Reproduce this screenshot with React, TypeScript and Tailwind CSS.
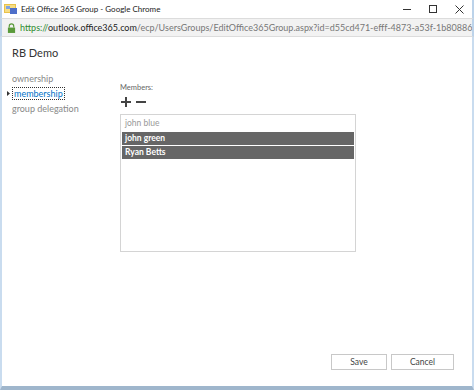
import React from "react";

export default function App() {
  const font = { fontFamily: 'Lato, "Open Sans", Arial, sans-serif' };
  return (
    <div className="w-[474px] h-[390px] bg-white flex flex-col overflow-hidden" style={font}>
      {/* title bar */}
      <div className="h-[18px] flex items-center border-l-2 border-r-2 border-[#bcd3ea] bg-white">
        <svg width="14" height="12" viewBox="0 0 14 12" className="ml-[2px] mr-[3px]">
          <rect x="0" y="1" width="12" height="9" fill="#e9c24a" />
          <rect x="1" y="2" width="10" height="7" fill="#f6dd84" />
          <rect x="6" y="5" width="7" height="6" fill="#4e6fc9" />
          <rect x="2" y="3" width="4" height="3" fill="#7fa4e0" />
        </svg>
        <span className="text-[8px] text-[#222]">Edit Office 365 Group - Google Chrome</span>
        <div className="ml-auto flex items-center h-full">
          <span className="w-[26px] flex justify-center"><span className="block w-[8px] h-px bg-[#333]" /></span>
          <span className="w-[26px] flex justify-center"><span className="block w-[8px] h-[8px] border border-[#333]" /></span>
          <span className="w-[26px] flex justify-center">
            <svg width="9" height="9" viewBox="0 0 9 9"><path d="M0.5 0.5L8.5 8.5M8.5 0.5L0.5 8.5" stroke="#333" strokeWidth="1" /></svg>
          </span>
        </div>
      </div>
      {/* address bar */}
      <div className="h-[19px] flex items-center bg-[#f2f2f2] border-t border-b border-[#dcdcdc] border-l-2 border-l-[#bcd3ea] border-r-2 border-r-[#bcd3ea] whitespace-nowrap overflow-hidden">
        <svg width="9" height="10" viewBox="0 0 10 11" className="ml-[5px] mr-[4px] shrink-0">
          <path d="M2.5 5V3.5a2.5 2.5 0 0 1 5 0V5" fill="none" stroke="#5a9a3a" strokeWidth="1.3" />
          <rect x="1" y="5" width="8" height="6" fill="#5a9a3a" />
        </svg>
        <span className="text-[9px]">
          <span className="text-[#2e8b2e]">https://</span>
          <span className="text-[#222]">outlook.office365.com</span>
          <span className="text-[#777]">/ecp/UsersGroups/EditOffice365Group.aspx?id=d55cd471-efff-4873-a53f-1b80886</span>
        </span>
      </div>
      {/* content */}
      <div className="flex-1 flex flex-col border-l-2 border-r-2 border-[#c9dcef] border-b-[4px] border-b-[#9fb6cc]">
        <div className="pl-[10px] pt-[6px] h-[26px] leading-[20px] text-[11px] text-[#333]">RB Demo</div>
        <div className="flex flex-1">
          <div className="w-[118px] pt-[9px] flex flex-col text-[9px]">
            <div className="pl-[10px] h-[14px] leading-[14px] text-[#888]">ownership</div>
            <div className="relative pl-[10px] h-[15px] flex items-center">
              <svg width="3" height="5" viewBox="0 0 3 5" className="absolute left-[5px] top-[5px]"><path d="M0 0L3 2.5L0 5Z" fill="#333" /></svg>
              <span className="border border-dotted border-[#333] px-px leading-[11px] text-[#0072c6]">membership</span>
            </div>
            <div className="pl-[10px] h-[15px] leading-[15px] text-[#888]">group delegation</div>
          </div>
          <div className="flex-1 flex flex-col">
            <div className="pt-[20px] h-[30px] text-[7.5px] text-[#666] leading-[10px]">Members:</div>
            <div className="flex items-center gap-[5px] h-[14px] mt-[2px] pl-px">
              <svg width="10" height="10" viewBox="0 0 10 10"><path d="M5 0V10M0 5H10" stroke="#444" strokeWidth="2" /></svg>
              <svg width="10" height="10" viewBox="0 0 10 10"><path d="M0 5H10" stroke="#444" strokeWidth="2" /></svg>
            </div>
            <div className="mt-[5px] w-[236px] h-[138px] border border-[#d4d4d4] p-px flex flex-col gap-px text-[8.5px]">
              <div className="h-[15px] leading-[15px] px-[3px] text-[#999]">john blue</div>
              <div className="h-[13px] leading-[13px] px-[3px] bg-[#666] text-white font-bold">john green</div>
              <div className="h-[13px] leading-[13px] px-[3px] bg-[#666] text-white font-bold">Ryan Betts</div>
            </div>
          </div>
        </div>
        <div className="flex justify-end gap-[4px] pr-[18px] pb-[16px] text-[8.5px] text-[#444]">
          <button className="w-[56px] h-[16px] border border-[#c8c8c8] bg-white">Save</button>
          <button className="w-[63px] h-[16px] border border-[#c8c8c8] bg-white">Cancel</button>
        </div>
      </div>
    </div>
  );
}
